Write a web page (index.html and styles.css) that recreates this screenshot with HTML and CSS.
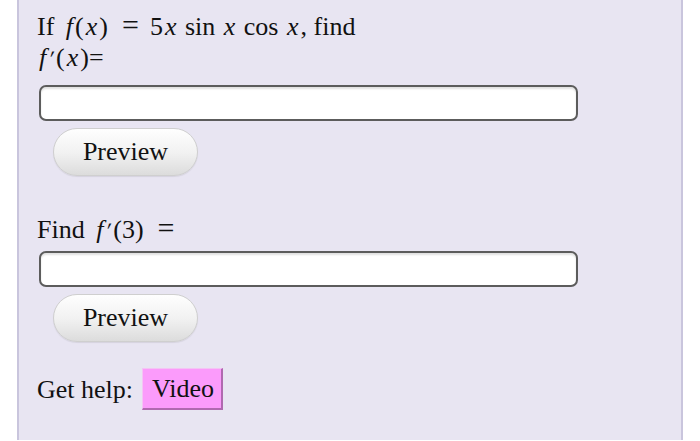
FILE: index.html
```html
<!DOCTYPE html>
<html>
<head>
<meta charset="utf-8">
<link rel="stylesheet" href="styles.css">
</head>
<body>
<div class="panel">
  <div class="line">If <span class="mi fsp">f</span>(<span class="mi">x</span>)<span class="mo">=</span>5<span class="mi">x</span> sin <span class="mi">x</span> cos <span class="mi">x</span>, find</div>
  <div class="line"><span class="mi">f</span><span class="prime">′</span>(<span class="mi">x</span>)=</div>
  <input class="answer first" type="text">
  <button class="preview">Preview</button>
  <div class="line find">Find <span class="mi fsp">f</span><span class="prime">′</span>(3)<span class="mo">=</span></div>
  <input class="answer" type="text">
  <button class="preview">Preview</button>
  <div class="line help">Get help: <span class="video">Video</span></div>
</div>
</body>
</html>
```
FILE: styles.css
```css
html, body {
  margin: 0;
  padding: 0;
  background: #ffffff;
}
body {
  font-family: "Liberation Serif", "Times New Roman", serif;
  color: #111;
}
.panel {
  margin-left: 17px;
  height: 440px;
  box-sizing: border-box;
  width: 666px;
  border-left: 2px solid #c9c5dd;
  border-right: 2px solid #c9c5dd;
  background: #e8e5f2;
  padding: 11px 0 0 18px;
  display: flex;
  flex-direction: column;
  align-items: flex-start;
}
.line {
  font-size: 26px;
  line-height: 31px;
  height: 31px;
  white-space: nowrap;
}
.mi {
  font-style: italic;
  padding: 0 2px;
}
.fsp {
  margin-left: 3px;
}
.prime {
  display: inline-block;
  font-size: 22px;
  line-height: 0;
  padding: 0 2px 0 1px;
  transform: skewX(-12deg);
}
.mo {
  font-size: 30px;
  line-height: 0;
  padding: 0 11px 0 14px;
}
.answer {
  display: block;
  margin: 6px 0 0 2px;
  width: 539px;
  height: 36px;
  box-sizing: border-box;
  border: 2px solid #5c5c5c;
  border-radius: 7px;
  background: #ffffff;
  box-shadow: inset 0 2px 2px rgba(0,0,0,0.12);
  padding: 0;
}
.answer.first {
  margin-top: 12px;
}
.preview {
  display: block;
  margin: 7px 0 0 16px;
  width: 145px;
  height: 48px;
  box-sizing: border-box;
  border: 1px solid #cfcfcf;
  border-radius: 24px;
  background: linear-gradient(#fefefe 0%, #f2f2f2 50%, #dcdcdc 100%);
  box-shadow: 0 1px 1px rgba(0,0,0,0.08);
  font-family: "Liberation Serif", "Times New Roman", serif;
  font-size: 26px;
  color: #111;
  padding: 0;
}
.find {
  margin-top: 38px;
}
.help {
  margin-top: 26px;
  height: auto;
  display: flex;
  align-items: center;
}
.video {
  display: inline-block;
  margin-left: 9px;
  height: 42px;
  line-height: 40px;
  box-sizing: border-box;
  padding: 0 7px 0 9px;
  background: #fb9bfb;
  border-top: 1px solid #f4c4f4;
  border-left: 1px solid #f4c4f4;
  border-right: 2px solid #b069b0;
  border-bottom: 2px solid #b069b0;
}
```
